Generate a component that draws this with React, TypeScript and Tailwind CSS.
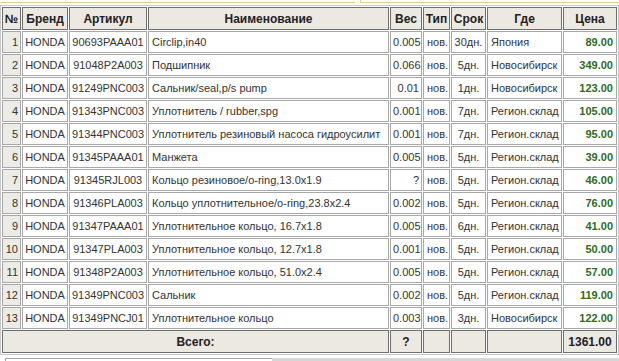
import React from 'react';

type Row = [string, string, string, string, string, string, string];

const rows: Row[] = [
    ['90693PAAA01', 'Circlip,in40', '0.005', 'нов.', '30дн.', 'Япония', '89.00'],
    ['91048P2A003', 'Подшипник', '0.066', 'нов.', '5дн.', 'Новосибирск', '349.00'],
    ['91249PNC003', 'Сальник/seal,p/s pump', '0.01', 'нов.', '1дн.', 'Новосибирск', '123.00'],
    ['91343PNC003', 'Уплотнитель / rubber,spg', '0.001', 'нов.', '7дн.', 'Регион.склад', '105.00'],
    ['91344PNC003', 'Уплотнитель резиновый насоса гидроусилит', '0.001', 'нов.', '7дн.', 'Регион.склад', '95.00'],
    ['91345PAAA01', 'Манжета', '0.005', 'нов.', '5дн.', 'Регион.склад', '39.00'],
    ['91345RJL003', 'Кольцо резиновое/o-ring,13.0x1.9', '?', 'нов.', '5дн.', 'Регион.склад', '46.00'],
    ['91346PLA003', 'Кольцо уплотнительное/o-ring,23.8x2.4', '0.002', 'нов.', '5дн.', 'Регион.склад', '76.00'],
    ['91347PAAA01', 'Уплотнительное кольцо, 16.7x1.8', '0.005', 'нов.', '6дн.', 'Регион.склад', '41.00'],
    ['91347PLA003', 'Уплотнительное кольцо, 12.7x1.8', '0.001', 'нов.', '5дн.', 'Регион.склад', '50.00'],
    ['91348P2A003', 'Уплотнительное кольцо, 51.0x2.4', '0.005', 'нов.', '5дн.', 'Регион.склад', '57.00'],
    ['91349PNC003', 'Сальник', '0.002', 'нов.', '5дн.', 'Регион.склад', '119.00'],
    ['91349PNCJ01', 'Уплотнительное кольцо', '0.003', 'нов.', '3дн.', 'Новосибирск', '122.00'],
];

const th = 'h-[23px] p-0 border border-[#6f6f6f] bg-[#ece9e2] text-[12px] font-bold text-[#222] text-center';
const td = 'h-[22px] py-0 px-[3px] border border-[#a8a8a8] bg-white text-[11px] text-[#333] whitespace-nowrap';
const tt = 'h-[23px] p-0 border border-[#6f6f6f] bg-[#ece9e2] text-[12px] font-bold text-[#222]';

const App: React.FC = () => {
    return (
        <div className="w-[619px] h-[361px] overflow-hidden bg-white font-['Liberation_Sans',Arial,sans-serif]">
            <div className="flex h-[3px] gap-[5px]">
                <div className="w-[355px] bg-[#fffdf0] border-b border-[#dcd29a]" />
                <div className="flex-1 bg-[#fffdf0] border-b border-l border-[#dcd29a]" />
            </div>
            <table className="mt-[2px] w-[619px] table-fixed border-separate border-spacing-[1px] border border-[#c8c8c8]">
                <thead>
                    <tr>
                        <th className={`${th} w-[19px]`}>№</th>
                        <th className={`${th} w-[46px]`}>Бренд</th>
                        <th className={`${th} w-[78px]`}>Артикул</th>
                        <th className={th}>Наименование</th>
                        <th className={`${th} w-[32px]`}>Вес</th>
                        <th className={`${th} w-[27px]`}>Тип</th>
                        <th className={`${th} w-[35px]`}>Срок</th>
                        <th className={`${th} w-[75px]`}>Где</th>
                        <th className={`${th} w-[54px]`}>Цена</th>
                    </tr>
                </thead>
                <tbody>
                    {rows.map((r, i) => (
                        <tr key={i}>
                            <td className={`${td} !bg-[#ecebe6] text-right !px-[2px]`}>{i + 1}</td>
                            <td className={`${td} text-center !px-0`}>HONDA</td>
                            <td className={`${td} text-center !px-0`}>{r[0]}</td>
                            <td className={`${td} overflow-hidden`}>{r[1]}</td>
                            <td className={`${td} text-right !px-[2px]`}>{r[2]}</td>
                            <td className={td}>{r[3]}</td>
                            <td className={`${td} text-center !px-0`}>{r[4]}</td>
                            <td className={`${td} overflow-hidden`}>{r[5]}</td>
                            <td className={`${td} text-right font-bold !text-[#2f6b1e]`}>{r[6]}</td>
                        </tr>
                    ))}
                    <tr>
                        <td colSpan={4} className={`${tt} text-center`}>Всего:</td>
                        <td className={`${tt} text-center`}>?</td>
                        <td className={tt} />
                        <td className={tt} />
                        <td className={tt} />
                        <td className={`${tt} text-center`}>1361.00</td>
                    </tr>
                </tbody>
            </table>
            <div className="mt-[3px] flex h-[8px]">
                <div className="ml-[5px] w-[267px] border-t border-l border-[#a8a8a8] bg-white" />
                <div className="flex-1 bg-[#d6d6d6]" />
            </div>
        </div>
    );
};

export default App;
